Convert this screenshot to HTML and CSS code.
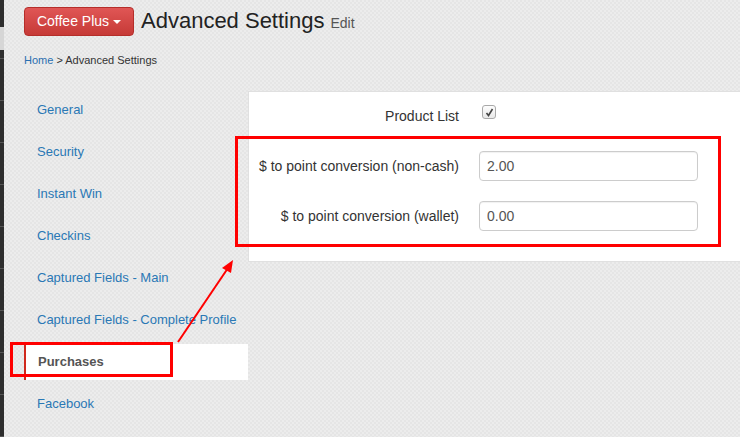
FILE: index.html
```html
<!DOCTYPE html>
<html>
<head>
<meta charset="utf-8">
<link rel="stylesheet" href="styles.css">
</head>
<body>
<div class="page">
  <div class="strip"></div>
  <div class="main">
    <header class="header">
      <button class="brand">Coffee Plus <span class="caret"></span></button>
      <h1 class="title">Advanced Settings</h1>
      <span class="edit">Edit</span>
    </header>
    <nav class="crumbs"><a class="crumb-link">Home</a> &gt; Advanced Settings</nav>
    <div class="body">
      <ul class="side">
        <li class="side-item">General</li>
        <li class="side-item">Security</li>
        <li class="side-item">Instant Win</li>
        <li class="side-item">Checkins</li>
        <li class="side-item">Captured Fields - Main</li>
        <li class="side-item">Captured Fields - Complete Profile</li>
        <li class="side-item active">Purchases</li>
        <li class="side-item">Facebook</li>
      </ul>
      <section class="panel">
        <div class="form">
          <label class="lbl">Product List</label>
          <div class="ctl"><span class="check">
            <svg width="9" height="9" viewBox="0 0 9 9"><path d="M1.5 5 L3.5 7.5 L7.5 1" fill="none" stroke="#444" stroke-width="1.6"/></svg>
          </span></div>
          <label class="lbl">$ to point conversion (non-cash)</label>
          <div class="ctl"><input class="inp" value="2.00"></div>
          <label class="lbl">$ to point conversion (wallet)</label>
          <div class="ctl"><input class="inp" value="0.00"></div>
        </div>
      </section>
    </div>
  </div>
</div>
<div class="mark mark-form"></div>
<div class="mark mark-side"></div>
<svg class="arrow" width="740" height="437" viewBox="0 0 740 437">
  <line x1="178" y1="342" x2="228" y2="268" stroke="#f00" stroke-width="2"/>
  <polygon points="233,260 222,268 231,273" fill="#f00"/>
</svg>
</body>
</html>
```

FILE: styles.css
```css
html, body {
  margin: 0;
  padding: 0;
}
body {
  width: 740px;
  height: 437px;
  overflow: hidden;
  font-family: "Liberation Sans", Arial, sans-serif;
  color: #333;
  background: repeating-conic-gradient(#ececec 0 25%, #e5e5e5 0 50%) 0 0 / 4px 4px;
  position: relative;
}
.page {
  display: flex;
  height: 437px;
}
.strip {
  width: 4px;
  flex: none;
  background:
    linear-gradient(#2e2e2e 0 27px, #d6d6d6 27px 50px, transparent 50px),
    repeating-linear-gradient(#2e2e2e 0 41px, #555 41px 42px);
  background-position: 0 0, 0 17px;
}
.main {
  flex: 1;
  padding-left: 20px;
  display: flex;
  flex-direction: column;
}
.header {
  display: flex;
  align-items: baseline;
  padding-top: 7px;
  height: 29px;
}
.brand {
  height: 29px;
  width: 110px;
  border: 1px solid #b52e2a;
  border-radius: 4px;
  background: linear-gradient(#e05655, #c63a37);
  color: #fff;
  font-family: "Liberation Sans", Arial, sans-serif;
  font-size: 14px;
  padding: 0 0 1px 0;
  align-self: flex-start;
  display: flex;
  align-items: center;
  justify-content: center;
  gap: 4px;
}
.caret {
  width: 0;
  height: 0;
  border-left: 4px solid transparent;
  border-right: 4px solid transparent;
  border-top: 4px solid #fff;
  margin-top: 1px;
}
.title {
  margin: 0 0 0 7px;
  font-size: 22px;
  font-weight: normal;
  color: #222;
  line-height: 29px;
  position: relative;
  top: -1px;
}
.edit {
  font-size: 14px;
  color: #555;
  margin-left: 6px;
  position: relative;
  top: -1px;
}
.crumbs {
  font-size: 11px;
  color: #333;
  margin-top: 18px;
  height: 13px;
  line-height: 13px;
}
.crumb-link {
  color: #2a6fb0;
}
.body {
  display: flex;
  margin-top: 24px;
  flex: 1;
}
.side {
  list-style: none;
  margin: 0;
  padding: 1px 0 0 0;
  width: 224px;
  flex: none;
  display: flex;
  flex-direction: column;
  gap: 6px;
}
.side-item {
  height: 36px;
  line-height: 36px;
  padding-left: 13px;
  font-size: 13px;
  color: #2a78b5;
  white-space: nowrap;
}
.side-item.active {
  background: #fff;
  color: #555;
  font-weight: bold;
  border-left: 2px solid #d0281c;
  padding-left: 12px;
}
.panel {
  flex: 1;
  align-self: flex-start;
  background: #fff;
  border: 1px solid #e0e0e0;
  border-right: none;
  height: 171px;
  box-sizing: border-box;
  padding-top: 9px;
}
.form {
  display: grid;
  grid-template-columns: 210px 219px;
  grid-auto-rows: 30px;
  row-gap: 20px;
  column-gap: 20px;
}
.lbl {
  font-size: 14px;
  color: #333;
  text-align: right;
  line-height: 30px;
  white-space: nowrap;
}
.ctl {
  display: flex;
  align-items: flex-start;
}
.check {
  margin: 4px 0 0 3px;
  width: 12px;
  height: 12px;
  border: 1px solid #a9a9a9;
  border-radius: 3px;
  background: linear-gradient(#fdfdfd, #e9e9e9);
  display: flex;
  align-items: center;
  justify-content: center;
}
.inp {
  width: 219px;
  height: 30px;
  box-sizing: border-box;
  border: 1px solid #ccc;
  border-radius: 4px;
  padding: 0 7px;
  font-family: "Liberation Sans", Arial, sans-serif;
  font-size: 14px;
  color: #555;
  box-shadow: inset 0 1px 1px rgba(0,0,0,0.06);
}
.mark {
  position: absolute;
  border: 3px solid #f00;
  box-sizing: border-box;
}
.mark-form {
  left: 235px;
  top: 136px;
  width: 486px;
  height: 111px;
}
.mark-side {
  left: 10px;
  top: 342px;
  width: 163px;
  height: 35px;
}
.arrow {
  position: absolute;
  left: 0;
  top: 0;
  pointer-events: none;
}
```
